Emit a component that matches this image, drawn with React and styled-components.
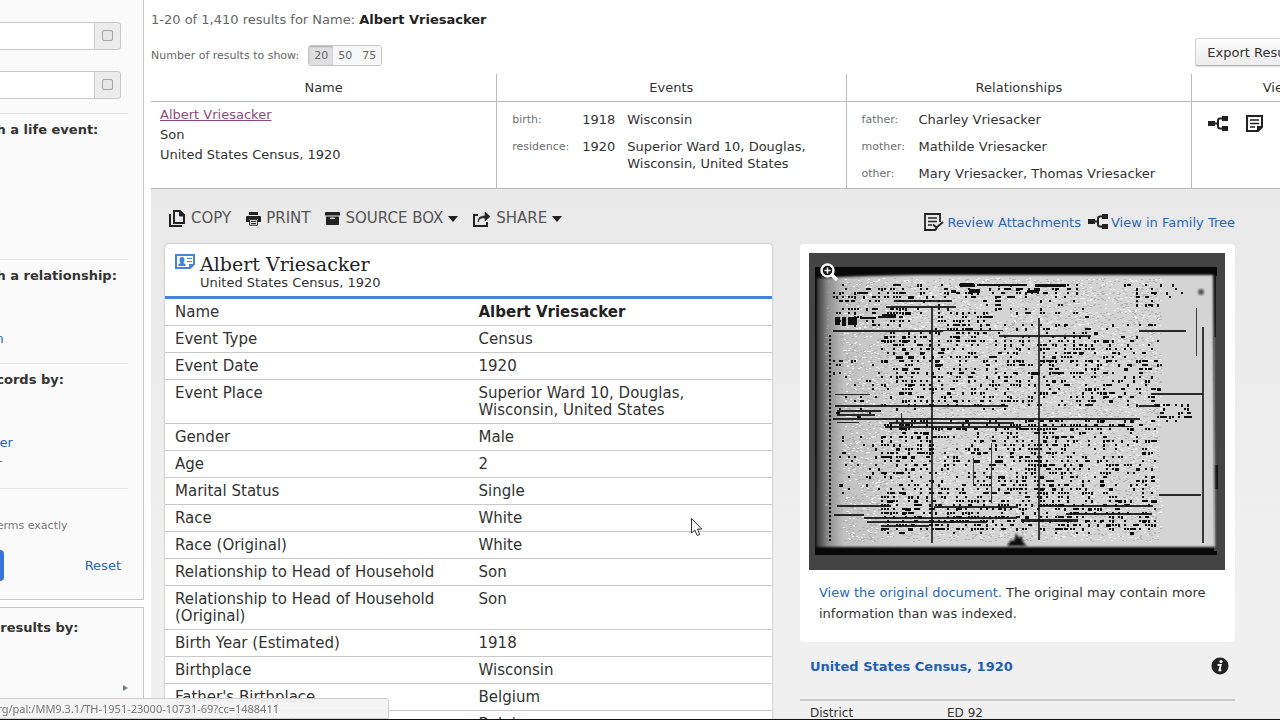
import React from "react";
import styled, { createGlobalStyle, css } from "styled-components";

const GlobalStyle = createGlobalStyle`
  * {
    box-sizing: border-box;
  }
  body {
    margin: 0;
    background: #fff;
    color: #333331;
    font-family: "DejaVu Sans", Verdana, sans-serif;
    font-size: 13px;
    line-height: 17px;
  }
  button, input {
    font: inherit;
    color: inherit;
  }
  a {
    color: #2a66b8;
    text-decoration: none;
  }
`;

const Page = styled.div`
  display: flex;
  gap: 7px;
  height: 100vh;
  overflow: hidden;
`;

/* ---- sidebar ---- */

const Sidebar = styled.aside`
  flex: 0 0 241px;
  min-width: 0;
  margin-left: -97px;
  display: flex;
  flex-direction: column;
  gap: 7px;
`;

const SidePanel = styled.div`
  flex-shrink: 0;
  padding: 0 15px 18px;
  background: #fafafa;
  border: 1px solid #c9c9c9;
  border-top-width: ${props => (props.$open ? 0 : "1px")};
`;

const SideSection = styled.section`
  display: flex;
  flex-direction: column;
  align-items: flex-start;
  padding: 5px 0 14px;
  line-height: 21px;
  border-top: 1px solid #e2e2e2;

  h3 {
    margin: 0;
    font-size: 13px;
    white-space: nowrap;
  }
`;

const SearchFields = styled.div`
  padding: 1px 7px 14px 0;
`;

const FieldLabel = styled.label`
  display: block;
  font-size: 11px;
  line-height: 21px;
`;

const InputGroup = styled.div`
  display: flex;
  height: 28px;
  border: 1px solid #c8c8c8;
  border-radius: 3px;
  background: #ececec;
`;

const TextInput = styled.input`
  flex: 1;
  min-width: 0;
  padding: 0 6px;
  background: #fff;
  border: 0;
  border-right: 1px solid #ccc;
`;

const Checkbox = styled.input`
  appearance: none;
  flex-shrink: 0;
  width: 11px;
  height: 11px;
  margin: 7px;
  border: 1px solid #a5a5a5;
  border-radius: 2px;
  background: #e6e6e6;
`;

const ExactRow = styled.div`
  display: flex;
  align-items: center;
  padding-top: 26px;
  border-top: 1px solid #e2e2e2;
  color: #777;
  font-size: 11px;
  line-height: 21px;

  ${Checkbox} {
    margin: 0 9px 0 0;
  }
`;

const FormActions = styled.div`
  display: flex;
  align-items: center;
  justify-content: space-between;
  padding: 14px 7px 0 0;
`;

const SearchButton = styled.button`
  width: 85px;
  height: 31px;
  border: 0;
  border-radius: 4px;
  background: #3873d9;
  color: #fff;
`;

const FilterHeading = styled.h3`
  margin: 9px 0 39px;
  font-size: 13px;
  line-height: 21px;
`;

const FilterRow = styled.a`
  display: flex;
  align-items: center;
  justify-content: space-between;
  line-height: 21px;
`;

/* ---- results ---- */

const Main = styled.main`
  flex: 1 0 1213px;
`;

const ResultsHeading = styled.h1`
  margin: 10px 0 16px;
  color: #666;
  font-size: 13px;
  font-weight: normal;
  line-height: 19px;

  strong {
    color: #222;
  }
`;

const ResultsBar = styled.div`
  display: flex;
  align-items: flex-start;
  justify-content: space-between;
  height: 29px;
  padding-right: 51px;
  margin-top: -7px;
`;

const PageSize = styled.div`
  display: flex;
  align-items: center;
  gap: 9px;
  margin-top: 7px;
  color: #666;
  font-size: 11px;
`;

const ButtonGroup = styled.div`
  display: flex;
  border: 1px solid #c6c6c6;
  border-radius: 3px;
  overflow: hidden;
`;

const SizeButton = styled.button`
  width: 24px;
  height: 19px;
  padding: 0;
  border: 0;
  background: #f7f7f7;
  font-size: 11px;
  line-height: 19px;

  ${props =>
    props.$active &&
    css`
      background: #e0e0e0;
      box-shadow: inset 0 1px 2px #aaa;
    `}
`;

const ExportButton = styled.button`
  height: 28px;
  padding: 0 11px;
  border: 1px solid #d2d2d2;
  border-bottom-color: #b5b5b5;
  border-radius: 3px;
  background: linear-gradient(#fcfcfc, #ececec);
  box-shadow: 0 1px 1px #ddd;
  white-space: nowrap;
`;

const ResultsTable = styled.table`
  width: 100%;
  margin-top: 7px;
  table-layout: fixed;
  border-collapse: collapse;
  border-bottom: 1px solid #bdbdbd;

  th {
    height: 27px;
    padding: 0;
    border-bottom: 1px solid #bdbdbd;
    font-weight: normal;
  }
  td {
    height: 87px;
    padding: 3px 9px 0;
    vertical-align: top;
  }
  th + th,
  td + td {
    border-left: 1px solid #bdbdbd;
  }
`;

const VisitedLink = styled.a`
  color: #8f4a7d;
  text-decoration: underline;
`;

const Stack = styled.div`
  line-height: 20px;
`;

const Facts = styled.dl`
  display: grid;
  grid-template-columns: ${props => props.$columns};
  row-gap: 10px;
  margin: 6px 0 0 6px;

  dt {
    color: #707070;
    font-size: 11px;
  }
  dd {
    margin: 0;
  }
`;

const ViewIcons = styled.div`
  display: flex;
  align-items: center;
  gap: 18px;
  padding: 10px 7px;
`;

const IconButton = styled.button`
  display: flex;
  padding: 0;
  border: 0;
  background: none;
  color: #222;
`;

/* ---- detail ---- */

const Detail = styled.div`
  display: grid;
  grid-template-columns: minmax(0, 607fr) minmax(0, 435fr);
  column-gap: 28px;
  padding: 0 129px 0 14px;
  background: linear-gradient(#e9e9e9, #f0f0f0 400px);
`;

const Toolbar = styled.div`
  display: flex;
  align-items: center;
  gap: 15px;
  height: 55px;
  padding: 5px 4px 0;
`;

const ToolButton = styled.button`
  display: flex;
  align-items: center;
  gap: 5px;
  padding: 0;
  border: 0;
  background: none;
  color: #555;
  font-size: 15px;
  line-height: 19px;

  svg {
    color: #222;
  }
`;

const RecordLinks = styled.div`
  display: flex;
  align-items: center;
  justify-content: flex-end;
  gap: 7px;
  height: 55px;
  padding-top: 12px;
  white-space: nowrap;

  a {
    display: flex;
    align-items: center;
    gap: 3px;
  }
  svg {
    color: #222;
  }
`;

const RecordCard = styled.article`
  background: #fff;
  border-radius: 4px 4px 0 0;
  box-shadow: 0 0 2px #999;
`;

const RecordHeader = styled.header`
  display: flex;
  gap: 5px;
  height: 55px;
  padding: 10px;
  border-bottom: 3px solid #4583dc;

  h2 {
    margin: 0;
    color: #222;
    font-family: "DejaVu Serif", Rockwell, serif;
    font-size: 19px;
    font-weight: normal;
    line-height: 20px;
  }
  p {
    margin: 0;
  }
`;

const RecordTable = styled.table`
  width: 100%;
  table-layout: fixed;
  border-collapse: collapse;
  font-size: 15px;
  line-height: 17px;

  th,
  td {
    padding: 5px 10px 4px;
    border-bottom: 1px solid #c8c8c8;
    font-weight: normal;
    text-align: left;
    vertical-align: top;
  }
  tr:first-child td {
    font-weight: bold;
    color: #222;
  }
`;

const DocumentCard = styled.figure`
  margin: 0;
  padding: 9px 10px 18px 9px;
  background: #fff;
  border-radius: 4px;

  svg {
    display: block;
    width: 100%;
  }
  figcaption {
    padding: 12px 10px 0;
    line-height: 21px;
  }
`;

const CollectionTitle = styled.div`
  display: flex;
  justify-content: space-between;
  padding: 15px 6px 22px 10px;
  font-weight: bold;
  line-height: 20px;

  a {
    color: #1f5fb8;
  }
`;

const CollectionTable = styled.table`
  width: 100%;
  border-top: 2px solid #cacaca;
  border-collapse: collapse;
  font-size: 12px;

  th {
    width: 147px;
    padding: 4px 10px;
    font-weight: normal;
    text-align: left;
  }
  td {
    padding: 4px 0;
  }
`;

/* ---- browser overlay ---- */

const StatusBar = styled.div`
  position: fixed;
  left: -1px;
  bottom: 1px;
  width: 390px;
  height: 21px;
  padding-right: 109px;
  overflow: hidden;
  border: 1px solid #d0d0d0;
  border-radius: 0 3px 0 0;
  background: rgba(243, 243, 243, 0.94);
  color: #777;
  font-family: "Noto Sans", sans-serif;
  font-size: 11px;
  line-height: 19px;
  direction: rtl;
  white-space: nowrap;

  span {
    direction: ltr;
    unicode-bidi: embed;
  }
`;

const BottomEdge = styled.div`
  position: fixed;
  inset: auto 0 0;
  height: 1px;
  background: #111;
`;

const Pointer = styled.svg`
  position: fixed;
  left: 690px;
  top: 517px;
`;

/* ---- icons ---- */

const TreeIcon = () => (
  <svg width="20" height="16" viewBox="0 0 20 16" fill="currentColor">
    <rect x="0" y="5" width="7" height="5" />
    <rect x="14" y="0" width="6" height="5" />
    <rect x="14" y="10" width="6" height="5" />
    <path d="M6 7.5h5M15 2.5h-3q-2 0-2 2v6q0 2 2 2h3" fill="none" stroke="currentColor" strokeWidth="2" />
  </svg>
);

const NoteIcon = () => (
  <svg width="18" height="18" viewBox="0 0 18 18" fill="none" stroke="currentColor" strokeWidth="2">
    <path d="M1 1h15v11l-4 4H1z" />
    <path d="M4 5h9M4 8.5h9M4 12h5" strokeWidth="1.6" />
    <path d="M11 17v-6h6z" fill="currentColor" stroke="none" />
  </svg>
);

const ReviewIcon = () => (
  <svg width="20" height="18" viewBox="0 0 20 18" fill="none" stroke="currentColor" strokeWidth="1.8">
    <path d="M16 9V1H1v16h10l2-2" />
    <path d="M4 5h9M4 8.5h9M4 12h4" strokeWidth="1.5" />
    <path d="M9 11.5l3.5 3L19 9" />
  </svg>
);

const CopyIcon = () => (
  <svg width="17" height="17" viewBox="0 0 17 17" fill="none" stroke="currentColor" strokeWidth="2">
    <path d="M5 1h6l4 4v8H5z" />
    <path d="M10.5 1v5H15z" fill="currentColor" strokeWidth="1" />
    <path d="M1 4v12h12" />
  </svg>
);

const PrintIcon = () => (
  <svg width="15" height="14" viewBox="0 0 15 14" fill="currentColor">
    <path d="M3 0h9v3H3zM1 4h13q1 0 1 1v5h-3V7H3v3H0V5q0-1 1-1z" />
    <path d="M3.6 7.6h7.8v5.6H3.6z" fill="#f4f4f4" stroke="currentColor" strokeWidth="1" />
    <path d="M5 9h5v1H5zM5 11h5v1H5z" />
  </svg>
);

const BoxIcon = () => (
  <svg width="15" height="13" viewBox="0 0 15 13" fill="currentColor">
    <path d="M1 0h13q1 0 1 1v2.4H0V1q0-1 1-1zM1 4.4h13V12q0 1-1 1H2q-1 0-1-1z" />
    <path d="M5 6.3h5" stroke="#eee" strokeWidth="1.4" />
  </svg>
);

const ShareIcon = () => (
  <svg width="18" height="16" viewBox="0 0 18 16" fill="none" stroke="currentColor" strokeWidth="2">
    <path d="M5 4H1v11h13v-4" />
    <path d="M5 11q0-6 6-6h1V1l5 4.5-5 4.5V7q-5-1-7 4z" fill="currentColor" strokeWidth="0.6" />
  </svg>
);

const Caret = () => (
  <svg width="10" height="6" viewBox="0 0 10 6" fill="currentColor">
    <path d="M0 0h10L5 6z" />
  </svg>
);

const PersonCardIcon = () => (
  <svg width="20" height="16" viewBox="0 0 20 16" fill="none" stroke="#4583dc" strokeWidth="2">
    <path d="M1 1h18v9l-4 4H1z" />
    <path d="M3.500 12V10l2.200-1Q4.500 8 4.500 6q0-3 2.500-3t2.500 3q0 2-1.200 3l2.200 1v2z" fill="#4583dc" stroke="none" />
    <path d="M12 4.5h5M12 7.5h5" strokeWidth="1.2" />
    <path d="M14 15v-5h5z" fill="#4583dc" stroke="none" />
  </svg>
);

const InfoIcon = () => (
  <svg width="18" height="18" viewBox="0 0 18 18">
    <circle cx="9" cy="9" r="8.5" fill="#222" />
    <circle cx="10" cy="4.6" r="1.6" fill="#fff" />
    <path d="M6.6 8h3.2L8.4 13.4h2" fill="none" stroke="#fff" strokeWidth="1.8" />
  </svg>
);

/* ---- scanned census sheet ---- */

function createRandom(seed) {
  let value = seed;
  return () => {
    value = (value * 16807) % 2147483647;
    return value / 2147483647;
  };
}

// x, y, width, height, number of marks
const inkAreas = [
  [24, 31, 70, 20, 55],
  [88, 31, 190, 14, 75],
  [85, 46, 190, 18, 45],
  [24, 54, 90, 18, 55],
  [125, 60, 57, 20, 65],
  [310, 31, 62, 22, 26],
  [180, 70, 165, 6, 22],
  [70, 80, 55, 75, 150],
  [124, 80, 62, 75, 130],
  [186, 80, 48, 75, 100],
  [232, 80, 55, 75, 120],
  [280, 80, 50, 75, 85],
  [330, 85, 20, 70, 25],
  [345, 150, 35, 18, 30],
  [25, 105, 40, 60, 25],
  [70, 168, 54, 90, 190],
  [124, 168, 60, 90, 140],
  [184, 168, 48, 90, 180],
  [231, 168, 30, 90, 120],
  [257, 168, 45, 90, 120],
  [300, 168, 46, 90, 90],
  [26, 182, 45, 58, 25],
  [70, 257, 115, 22, 120],
  [185, 257, 120, 22, 100],
  [300, 260, 45, 20, 35],
];

// Left to right strokes as x, y, length, thickness
const ruledLines = [
  [24, 78, 110, 2], [134, 78, 60, 1], [190, 83, 92, 2], [330, 78, 47, 2],
  [77, 54, 70, 2], [85, 48, 58, 2], [26, 142, 35, 1], [342, 141, 52, 2],
  [26, 153, 68, 2], [94, 153, 105, 2], [28, 158, 44, 2], [28, 162, 38, 2],
  [330, 153, 20, 2], [24, 166, 307, 2], [80, 170, 125, 2], [76, 174, 136, 2],
  [212, 174, 112, 1], [28, 170, 22, 1], [28, 253, 54, 2], [125, 254, 84, 2],
  [229, 253, 115, 2], [25, 262, 30, 2], [55, 265, 153, 2], [58, 269, 120, 2],
  [212, 267, 57, 3], [257, 261, 86, 2], [72, 273, 48, 2], [350, 242, 42, 2],
];

const columnLines = [
  [122, 54, 236, 2], [229, 65, 222, 2], [182, 190, 60, 1],
  [164, 205, 28, 1], [387, 55, 48, 1], [393, 74, 216, 2], [92, 160, 18, 1],
];

function buildMarks() {
  const random = createRandom(1920);
  let path = "";
  inkAreas.forEach(([x, y, width, height, count]) => {
    for (let i = 0; i < count; i++) {
      const left = Math.round((x + random() * width) / 3) * 3;
      const top = Math.round((y + random() * height) / 4) * 4 - 1;
      const long = random();
      const length = long > 0.96 ? 6 : long > 0.82 ? 4 : 2;
      path += `M${left} ${top}h${length}v${random() > 0.75 ? 3 : 2}h-${length}z`;
    }
  });
  for (let y = 82; y < 288; y += 4) {
    path += `M20 ${y}h2v2h-2z`;
  }
  return path;
}

function buildSpeckle(seed, count, left) {
  const random = createRandom(seed);
  let path = "";
  for (let i = 0; i < count; i++) {
    const x = Math.round(left + random() * (352 - left));
    const y = Math.round(25 + random() * 263);
    path += `M${x} ${y}h2v1h-2z`;
  }
  return path;
}

const marks = buildMarks();
const darkSpeckle = buildSpeckle(731, 5200, 16);
const lightSpeckle = buildSpeckle(4021, 3800, 34);

const CensusSheet = () => (
  <svg viewBox="0 0 416 317" role="img" aria-label="Census page">
    <defs>
      <linearGradient id="sheetEdge">
        <stop offset="0" stopColor="#333" />
        <stop offset="0.03" stopColor="#8c8c8c" />
        <stop offset="0.07" stopColor="#c2c2c2" />
        <stop offset="0.25" stopColor="#d4d4d4" />
        <stop offset="1" stopColor="#d4d4d4" />
      </linearGradient>
      <filter id="soft">
        <feGaussianBlur stdDeviation="0.9" />
      </filter>
      <filter id="ink">
        <feGaussianBlur stdDeviation="0.45" />
      </filter>
    </defs>
    <rect width="416" height="317" fill="#444" />
    <rect x="6" y="14" width="402" height="288" fill="#080808" />
    <path d="M405 23h9v275h-9z" fill="#444" />
    <path d="M400 22h7v62h-7zM405 212h4v24h-4z" fill="#151515" />
    <path d="M8 25L60 23L110 22H404L406 294H7z" fill="url(#sheetEdge)" filter="url(#soft)" />
    <g filter="url(#ink)">
      <path d={darkSpeckle} fill="#a5a5a5" opacity="0.65" />
      <path d={lightSpeckle} fill="#f4f4f4" opacity="0.9" />
    </g>
    <g fill="#d4d4d4">
      <rect x="348" y="81" width="37" height="20" />
      <rect x="300" y="113" width="32" height="26" />
      <rect x="351" y="180" width="39" height="55" />
      <rect x="184" y="49" width="17" height="19" />
      <rect x="104" y="112" width="15" height="27" />
    </g>
    <path d={marks} fill="#080808" filter="url(#ink)" />
    <g fill="#111">
      {ruledLines.map(([x, y, length, size]) => (
        <rect key={`${x}-${y}`} x={x} y={y - 1} width={length} height={size} opacity="0.88" />
      ))}
      {columnLines.map(([x, y, length, size]) => (
        <rect key={`${x}-${y}`} x={x} y={y} width={size} height={length} opacity="0.8" />
      ))}
      <path d="M151 30h14v4h-14zM168 31h50v2h-50zM226 31h31v3h-31zM26 64h5v8h-5zM33 64h4v9h-4zM39 64h9v8h-9zM53 64h14v2H53zM73 61h14v4H73zM142 37h5v3h-5zM160 36h11v4h-11zM218 37h12v3h-12z" />
      <path d="M198 293l4-6 3 1 2-8 3 5 3-2 1 6 4 4z" filter="url(#soft)" />
    </g>
    <circle cx="392" cy="39" r="3" fill="#555" filter="url(#soft)" />
    <g fill="none" stroke="#fff" strokeWidth="2.4">
      <circle cx="18.500" cy="17.500" r="6" fill="#111" />
      <path d="M23 22l5 5" strokeWidth="3.4" />
      <path d="M15.500 17.500h6M18.500 14.500v6" strokeWidth="1.5" />
    </g>
  </svg>
);

const searchSections = [
  {
    title: "Search with a life event:",
    links: ["Birth", "Marriage", "Residence", "Death", "Any"],
  },
  {
    title: "Search with a relationship:",
    links: ["Spouse", "Parents", "Other Person"],
  },
  {
    title: "Restrict records by:",
    links: ["Location", "Type", "Batch Number", "Film Number"],
  },
];

const recordRows = [
  ["Name", "Albert Vriesacker"],
  ["Event Type", "Census"],
  ["Event Date", "1920"],
  ["Event Place", "Superior Ward 10, Douglas, Wisconsin, United States"],
  ["Gender", "Male"],
  ["Age", "2"],
  ["Marital Status", "Single"],
  ["Race", "White"],
  ["Race (Original)", "White"],
  ["Relationship to Head of Household", "Son"],
  ["Relationship to Head of Household (Original)", "Son"],
  ["Birth Year (Estimated)", "1918"],
  ["Birthplace", "Wisconsin"],
  ["Father's Birthplace", "Belgium"],
  ["Mother's Birthplace", "Belgium"],
];

const SearchField = ({ id, label }) => (
  <>
    <FieldLabel htmlFor={id}>{label}</FieldLabel>
    <InputGroup>
      <TextInput id={id} type="text" />
      <Checkbox type="checkbox" aria-label={`${label} exactly`} />
    </InputGroup>
  </>
);

const SearchSidebar = () => (
  <Sidebar>
    <SidePanel $open>
      <SearchFields>
        <SearchField id="first-names" label="First Names" />
        <SearchField id="last-names" label="Last Names" />
      </SearchFields>
      {searchSections.map(section => (
        <SideSection key={section.title}>
          <h3>{section.title}</h3>
          {section.links.map(link => (
            <a href="#" key={link}>
              {link}
            </a>
          ))}
        </SideSection>
      ))}
      <ExactRow>
        <Checkbox type="checkbox" id="exact" />
        <label htmlFor="exact">Match all terms exactly</label>
      </ExactRow>
      <FormActions>
        <SearchButton>Search</SearchButton>
        <a href="#">Reset</a>
      </FormActions>
    </SidePanel>
    <SidePanel>
      <FilterHeading>Filter your results by:</FilterHeading>
      <FilterRow href="#">
        Collections
        <svg width="5" height="6" viewBox="0 0 5 6" fill="#6f7f7f">
          <path d="M0 0l5 3-5 3z" />
        </svg>
      </FilterRow>
      <FilterRow href="#">Birth Years</FilterRow>
    </SidePanel>
  </Sidebar>
);

const ResultList = () => (
  <ResultsTable>
    <colgroup>
      <col style={{ width: "28.5%" }} />
      <col style={{ width: "28.8%" }} />
      <col style={{ width: "28.5%" }} />
      <col />
    </colgroup>
    <thead>
      <tr>
        <th>Name</th>
        <th>Events</th>
        <th>Relationships</th>
        <th>View</th>
      </tr>
    </thead>
    <tbody>
      <tr>
        <td>
          <Stack>
            <VisitedLink href="#">Albert Vriesacker</VisitedLink>
            <div>Son</div>
            <div>United States Census, 1920</div>
          </Stack>
        </td>
        <td>
          <Facts $columns="70px 45px 200px">
            <dt>birth:</dt>
            <dd>1918</dd>
            <dd>Wisconsin</dd>
            <dt>residence:</dt>
            <dd>1920</dd>
            <dd>Superior Ward 10, Douglas, Wisconsin, United States</dd>
          </Facts>
        </td>
        <td>
          <Facts $columns="57px 1fr">
            <dt>father:</dt>
            <dd>Charley Vriesacker</dd>
            <dt>mother:</dt>
            <dd>Mathilde Vriesacker</dd>
            <dt>other:</dt>
            <dd>Mary Vriesacker, Thomas Vriesacker</dd>
          </Facts>
        </td>
        <td>
          <ViewIcons>
            <IconButton aria-label="Family tree">
              <TreeIcon />
            </IconButton>
            <IconButton aria-label="Record">
              <NoteIcon />
            </IconButton>
            <IconButton aria-label="Image">
              <BoxIcon />
            </IconButton>
          </ViewIcons>
        </td>
      </tr>
    </tbody>
  </ResultsTable>
);

const RecordDetail = () => (
  <Detail>
    <div>
      <Toolbar>
        <ToolButton>
          <CopyIcon />
          COPY
        </ToolButton>
        <ToolButton>
          <PrintIcon />
          PRINT
        </ToolButton>
        <ToolButton>
          <BoxIcon />
          SOURCE BOX
          <Caret />
        </ToolButton>
        <ToolButton>
          <ShareIcon />
          SHARE
          <Caret />
        </ToolButton>
      </Toolbar>
      <RecordCard>
        <RecordHeader>
          <PersonCardIcon />
          <div>
            <h2>Albert Vriesacker</h2>
            <p>United States Census, 1920</p>
          </div>
        </RecordHeader>
        <RecordTable>
          <tbody>
            {recordRows.map(([label, value]) => (
              <tr key={label}>
                <th scope="row">{label}</th>
                <td>{value}</td>
              </tr>
            ))}
          </tbody>
        </RecordTable>
      </RecordCard>
    </div>
    <div>
      <RecordLinks>
        <a href="#">
          <ReviewIcon />
          Review Attachments
        </a>
        <a href="#">
          <TreeIcon />
          View in Family Tree
        </a>
      </RecordLinks>
      <DocumentCard>
        <CensusSheet />
        <figcaption>
          <a href="#">View the original document.</a> The original may contain
          more information than was indexed.
        </figcaption>
      </DocumentCard>
      <CollectionTitle>
        <a href="#">United States Census, 1920</a>
        <InfoIcon />
      </CollectionTitle>
      <CollectionTable>
        <tbody>
          <tr>
            <th scope="row">District</th>
            <td>ED 92</td>
          </tr>
        </tbody>
      </CollectionTable>
    </div>
  </Detail>
);

export default function App() {
  return (
    <>
      <GlobalStyle />
      <Page>
        <SearchSidebar />
        <Main>
          <ResultsHeading>
            1-20 of 1,410 results for Name: <strong>Albert Vriesacker</strong>
          </ResultsHeading>
          <ResultsBar>
            <PageSize>
              Number of results to show:
              <ButtonGroup>
                <SizeButton $active>20</SizeButton>
                <SizeButton>50</SizeButton>
                <SizeButton>75</SizeButton>
              </ButtonGroup>
            </PageSize>
            <ExportButton>Export Results</ExportButton>
          </ResultsBar>
          <ResultList />
          <RecordDetail />
        </Main>
      </Page>
      <Pointer width="14" height="21" viewBox="0 0 14 21">
        <path d="M1.500 1.500v14.500l3.300-3 2.400 5.500 2.600-1.200-2.400-5.200h4.400z" fill="#fff" stroke="#333" />
      </Pointer>
      <StatusBar>
        <span>https://familysearch.org/pal:/MM9.3.1/TH-1951-23000-10731-69?cc=1488411</span>
      </StatusBar>
      <BottomEdge />
    </>
  );
}
